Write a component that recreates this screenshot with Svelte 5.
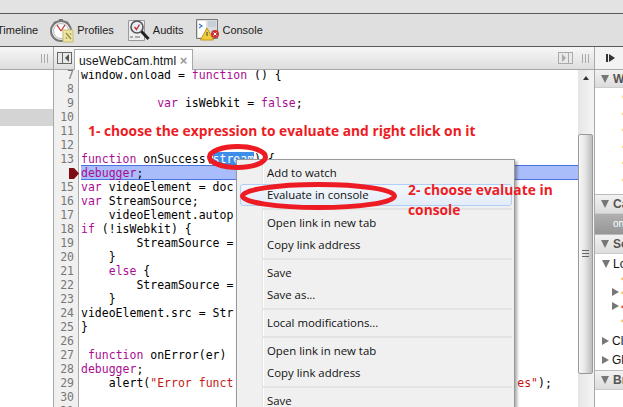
<script>
  const code = [
    [7, [['window.onload = '], ['function', 'kw'], [' () {']]],
    [8, []],
    [9, [['           '], ['var', 'kw'], [' isWebkit = '], ['false', 'kw'], [';']]],
    [10, []],
    [11, []],
    [12, []],
    [13, [['function', 'kw'], [' onSuccess('], ['stream', 'sel'], [') {']]],
    [14, [['debugger', 'kw'], [';']]],
    [15, [['var', 'kw'], [' videoElement = doc']]],
    [16, [['var', 'kw'], [' StreamSource;']]],
    [17, [['    videoElement.autop']]],
    [18, [['if', 'kw'], [' (!isWebkit) {']]],
    [19, [['        StreamSource =']]],
    [20, [['    }']]],
    [21, [['    '], ['else', 'kw'], [' {']]],
    [22, [['        StreamSource =']]],
    [23, [['    }']]],
    [24, [['videoElement.src = Str']]],
    [25, [['}']]],
    [26, []],
    [27, [[' '], ['function', 'kw'], [' onError(er)']]],
    [28, [['debugger', 'kw'], [';']]],
    [29, [['    alert('], ['"Error funct', 'str'], [' '.repeat(41)], ['es"', 'str'], [');']]],
    [30, []],
    [31, []]
  ];

  const menu = [
    ['Add to watch'], ['Evaluate in console', 'hover'], null,
    ['Open link in new tab'], ['Copy link address'], null,
    ['Save'], ['Save as...'], null,
    ['Local modifications...'], null,
    ['Open link in new tab'], ['Copy link address'], null,
    ['Save']
  ];

  const watchRows = [0, 1, 2, 3, 4, 5];
</script>

<div class="page">
  <div class="strip"></div>

  <div class="toolbar">
    <div class="tool first">Timeline</div>
    <div class="tool">
      <svg width="24" height="25" viewBox="0 0 24 25">
        <path d="M9 1h4v3H9z" fill="#777" />
        <path d="M3 5l2-2 2 2-2 2zM17 3l2 2-2 2-2-2z" fill="#888" />
        <circle cx="11" cy="13" r="10" fill="#f4f4f4" stroke="#777" stroke-width="2" />
        <circle cx="11" cy="13" r="7.5" fill="#fff" stroke="#bbb" />
        <path d="M11 13L7 7M11 13l4-6" stroke="#c83232" stroke-width="1.3" fill="none" />
        <path d="M13 12h10v12H13z" fill="#efe3a0" stroke="#c9bb78" />
        <path d="M16 15l5 6M16 20.5l1-1M20 16.500l1-1" stroke="#8a8a4a" stroke-width="1.2" />
      </svg>
      <span>Profiles</span>
    </div>
    <div class="tool">
      <svg width="23" height="23" viewBox="0 0 23 23">
        <path d="M1.500 1.500h16v20h-16z" fill="#eee" stroke="#999" />
        <path d="M3 17h3v2H3zM8 17h5v2H8z" fill="#aaa" />
        <circle cx="10" cy="8" r="6" fill="#e8eef8" stroke="#555" stroke-width="1.6" />
        <path d="M7.500 8l2 2.500 3-5" stroke="#c83232" stroke-width="1.4" fill="none" />
        <path d="M14.500 12.500l7 7.500" stroke="#222" stroke-width="3" />
      </svg>
      <span>Audits</span>
    </div>
    <div class="tool">
      <svg width="23" height="22" viewBox="0 0 23 22">
        <path d="M.5.500h21v19H.5z" fill="#ddd" stroke="#777" />
        <path d="M2 2h8v16H2z" fill="#fff" />
        <path d="M12 2h8v6h-8z" fill="#c8cfd8" />
        <path d="M3 5l3 2-3 2" stroke="#3a78d0" stroke-width="1.2" fill="none" />
        <path d="M11 9l6.500 12h-13z" fill="#f4cb3a" stroke="#b99a20" />
        <path d="M11 13v4" stroke="#444" />
        <circle cx="19" cy="15" r="4" fill="#c83232" />
        <path d="M17.500 13.500l3 3M20.500 13.500l-3 3" stroke="#fff" />
      </svg>
      <span>Console</span>
    </div>
  </div>

  <div class="tabbar">
    <div class="tabfiles"><span class="grip"></span></div>
    <span class="toggle"><i class="left"></i></span>
    <div class="tab">useWebCam.html <b>×</b></div>
    <span class="tabspace"></span>
    <span class="toggle off"><i class="right"></i></span>
    <span class="grip end"></span>
    <div class="resume"><i></i><em></em></div>
  </div>

  <div class="main">
    <div class="files"><div class="selfile"></div></div>

    <div class="editor">
      {#each code as [num, tokens]}
        <div class="row">
          <div class="num">
            {#if num === 14}
              <svg class="marker" width="10" height="11" viewBox="0 0 10 11"><path d="M0 0h5l5 5.500-5 5.500H0z" fill="#7d0d12" /></svg>
            {:else}
              {num}
            {/if}
          </div>
          <div class="text" class:current={num === 14}>{#each tokens as [t, cls]}<span class={cls}>{t}</span>{/each}</div>
        </div>
      {/each}
    </div>

    <div class="scroll">
      <i class="up"></i>
      <div class="thumb"><span></span></div>
    </div>

    <div class="side">
      <div class="head"><i></i>Wa</div>
      <div class="watch">
        {#each watchRows as r}<div class="orange">▪</div>{/each}
      </div>
      <div class="head"><i></i>Ca</div>
      <div class="frame">on</div>
      <div class="head"><i></i>Sc</div>
      <div class="scope">
        <div class="node open"><i></i>Lo</div>
        <div class="leaf"><span class="orange">▪</span></div>
        <div class="leaf"><u></u><span class="orange">▪</span></div>
        <div class="leaf"><u></u><span class="reddot">▪</span></div>
        <div class="leaf"><span class="orange">▪</span></div>
        <div class="node gap"><u></u>Cl</div>
        <div class="node"><u></u>Gl</div>
      </div>
      <div class="head"><i></i>Br</div>
    </div>
  </div>

  <div class="menu">
    {#each menu as item}
      {#if item}
        <div class="item" class:hover={item[1] === 'hover'}>{item[0]}</div>
      {:else}
        <div class="sep"></div>
      {/if}
    {/each}
  </div>

  <svg class="marks" width="623" height="407">
    <ellipse cx="237.500" cy="157" rx="28" ry="10.500" />
    <ellipse cx="318.500" cy="196" rx="76" ry="11.500" />
  </svg>

  <div class="note one">1- choose the expression to evaluate and right click on it</div>
  <div class="note two">2- choose evaluate in<br />console</div>
</div>

<style>
  :global(body) {
    margin: 0;
    background: #fff;
  }

  .page {
    position: relative;
    width: 623px;
    height: 407px;
    overflow: hidden;
    font-family: "Liberation Sans", Arial, sans-serif;
  }

  .strip {
    height: 13px;
    background: #e3e3e3;
    border-bottom: 1px solid #5a5a5a;
  }

  .toolbar {
    display: flex;
    align-items: center;
    gap: 13px;
    height: 32px;
    background: #dfdfdf;
    border-bottom: 1px solid #5a5a5a;
    font-size: 11px;
    color: #222;
  }

  .tool {
    display: flex;
    align-items: center;
    gap: 3px;
  }

  .tool.first {
    margin-left: -3px;
    margin-right: -1px;
  }

  .tabbar {
    display: flex;
    align-items: stretch;
    height: 22px;
    background: linear-gradient(#f7f7f7, #dedede);
    border-bottom: 1px solid #a8a8a8;
  }

  .tabfiles {
    width: 48px;
    padding-right: 5px;
    border-right: 1px solid #a8a8a8;
    display: flex;
    justify-content: flex-end;
    align-items: center;
  }

  .grip {
    width: 7px;
    height: 9px;
    background: repeating-linear-gradient(90deg, #aaa 0 1px, transparent 1px 3px);
  }

  .grip.end {
    align-self: center;
    margin-left: 7px;
    margin-right: 5px;
  }

  .toggle {
    align-self: center;
    position: relative;
    width: 13px;
    height: 10px;
    margin: 0 2px 0 3px;
    border: 1px solid #666;
    background: #e9e9e9;
  }

  .toggle.off {
    border-color: #aaa;
  }

  .toggle::before {
    content: "";
    position: absolute;
    top: 0;
    bottom: 0;
    left: 4px;
    width: 1px;
    background: #666;
  }

  .toggle.off::before {
    left: 9px;
    background: #aaa;
  }

  .toggle i {
    position: absolute;
    top: 1px;
    border: 4px solid transparent;
  }

  .toggle i.left {
    left: 7px;
    border-right-color: #555;
    border-left-width: 0;
  }

  .toggle i.right {
    left: 3px;
    border-left-color: #aaa;
    border-right-width: 0;
  }

  .tab {
    align-self: flex-end;
    box-sizing: border-box;
    width: 119px;
    height: 21px;
    margin-bottom: -1px;
    padding: 3px 0 0 4px;
    background: #fff;
    border: 1px solid #a8a8a8;
    border-bottom: 0;
    font-size: 12px;
    letter-spacing: 0.15px;
    color: #111;
    white-space: nowrap;
  }

  .tab b {
    color: #999;
    font-size: 13px;
  }

  .tabspace {
    flex: 1;
  }

  .resume {
    width: 29px;
    border-left: 1px solid #a8a8a8;
    background: #f3f3f3;
    display: flex;
    align-items: center;
    padding-left: 11px;
    box-sizing: border-box;
  }

  .resume i {
    width: 2px;
    height: 8px;
    background: #333;
    margin-right: 1px;
  }

  .resume em {
    border: 4px solid transparent;
    border-left: 6px solid #333;
    border-right: 0;
  }

  .main {
    display: flex;
    height: 337px;
    overflow: hidden;
  }

  .files {
    width: 53px;
    flex: none;
    border-right: 1px solid #a8a8a8;
    padding-top: 39px;
    background: #fff;
  }

  .selfile {
    height: 17px;
    background: #d4d4d4;
  }

  .editor {
    flex: 1;
    min-width: 0;
    margin-top: -2px;
    overflow: hidden;
    font-family: "DejaVu Sans Mono", monospace;
    font-size: 11.5px;
    line-height: 14px;
    color: #000;
  }

  .row {
    display: flex;
    height: 14px;
  }

  .num {
    position: relative;
    flex: none;
    box-sizing: border-box;
    width: 25px;
    padding-right: 4px;
    text-align: right;
    color: #777;
    background: #f0f0f0;
    border-right: 1px solid #a8a8a8;
  }

  .marker {
    position: absolute;
    left: 15px;
    top: 2px;
  }

  .text {
    flex: 1;
    min-width: 0;
    margin-left: 2px;
    white-space: pre;
  }

  .text.current {
    background: #a9bdfa;
    box-shadow: 0 -1px #4a72e0, inset 0 -1px #4a72e0;
    height: 14px;
  }

  .kw {
    color: #aa0d91;
  }

  .str {
    color: #c41a16;
  }

  .sel {
    color: #fff;
    background: #3d8ee8;
  }

  .scroll {
    position: relative;
    width: 16px;
    flex: none;
    background: linear-gradient(90deg, #e6e6e6, #f4f4f4);
    padding-top: 64px;
    box-sizing: border-box;
  }

  .up {
    position: absolute;
    left: 5px;
    top: 6px;
    border: 3.500px solid transparent;
    border-bottom: 4px solid #333;
    border-top: 0;
  }

  .thumb {
    display: flex;
    align-items: center;
    justify-content: center;
    box-sizing: border-box;
    height: 240px;
    margin-right: 1px;
    border: 1px solid #9a9a9a;
    border-radius: 2px;
    background: linear-gradient(90deg, #f7f7f7, #e6e6e6 45%, #bdbdbd);
  }

  .thumb span {
    width: 7px;
    height: 8px;
    background: repeating-linear-gradient(#666 0 1px, transparent 1px 3px);
  }

  .side {
    width: 29px;
    flex: none;
    box-sizing: border-box;
    border-left: 1px solid #a8a8a8;
    font-size: 12px;
    white-space: nowrap;
    overflow: hidden;
    background: #fff;
  }

  .head {
    display: flex;
    align-items: center;
    gap: 4px;
    box-sizing: border-box;
    height: 20px;
    padding-left: 6px;
    background: linear-gradient(#f2f2f2, #dcdcdc);
    border-top: 1px solid #bbb;
    border-bottom: 1px solid #ccc;
    color: #555;
    font-weight: bold;
  }

  .head:first-child {
    height: 18px;
    border-top: 0;
  }

  .head i, .node.open i {
    flex: none;
    border: 4.500px solid transparent;
    border-top: 8px solid #777;
    border-bottom: 0;
  }

  .watch {
    box-sizing: border-box;
    height: 106px;
    padding: 1px 0 0 27px;
    line-height: 16.500px;
  }

  .orange {
    color: #f7b878;
    font-size: 10px;
  }

  .reddot {
    color: #d84848;
    font-size: 10px;
  }

  .frame {
    height: 20px;
    line-height: 20px;
    padding-left: 18px;
    font-size: 10px;
    color: #fff;
    background: linear-gradient(#b0b0b0, #969696);
  }

  .scope {
    height: 116px;
    padding-top: 2px;
    box-sizing: border-box;
    font-size: 12px;
    color: #111;
  }

  .node, .leaf {
    display: flex;
    align-items: center;
    gap: 3px;
  }

  .node {
    height: 19px;
    padding-left: 7px;
  }

  .node.gap {
    margin-top: 4px;
  }

  .node.open {
    height: 15px;
  }

  .leaf {
    position: relative;
    padding-left: 17px;
    height: 14px;
  }

  .leaf .orange, .leaf .reddot {
    position: relative;
    left: 9px;
  }

  .leaf u {
    position: absolute;
    border: 4px solid transparent;
    border-left: 7px solid #777;
    border-right: 0;
  }

  .node u {
    flex: none;
    border: 4px solid transparent;
    border-left: 7px solid #777;
    border-right: 0;
  }

  .menu {
    position: absolute;
    left: 236px;
    top: 159px;
    box-sizing: border-box;
    width: 279px;
    padding: 2px 2px 2px 3px;
    background: linear-gradient(90deg, #f0f0f0 25px, #e4e4e4 25px, #e4e4e4 26px, #fff 26px, #fff 27px, #f0f0f0 27px);
    border: 1px solid #999;
    box-shadow: 2px 2px 3px rgba(0, 0, 0, 0.35);
    font-family: "Open Sans", sans-serif;
    font-size: 11.4px;
    color: #111;
  }

  .item {
    box-sizing: border-box;
    height: 22px;
    line-height: 21px;
    padding-left: 27px;
  }

  .item.hover {
    border: 1px solid #aecff7;
    border-radius: 3px;
    padding-left: 26px;
    line-height: 19px;
    background: linear-gradient(#f3f7fc, #e3ecf8);
  }

  .sep {
    height: 6px;
    margin-left: 23px;
    position: relative;
  }

  .sep::after {
    content: "";
    position: absolute;
    left: 0;
    right: 0;
    top: 2px;
    height: 2px;
    background: #e3e3e3;
  }

  .marks {
    position: absolute;
    left: 0;
    top: 0;
    pointer-events: none;
  }

  .marks ellipse {
    fill: none;
    stroke: #ed1c24;
    stroke-width: 5;
  }

  .note {
    position: absolute;
    font-family: "Open Sans", sans-serif;
    font-weight: 700;
    font-size: 13.8px;
    line-height: 19.5px;
    color: #ed1c24;
    white-space: nowrap;
  }

  .note.one {
    left: 88px;
    top: 121px;
  }

  .note.two {
    left: 408px;
    top: 180px;
  }
</style>
